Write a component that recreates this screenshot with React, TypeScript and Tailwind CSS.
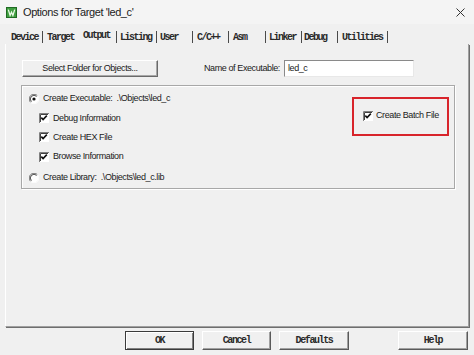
import React from "react";

const tabs: { label: string; cls: string; sep: boolean; sel?: boolean }[] = [
  { label: "Device", cls: "w-[37px] pl-[5px]", sep: true },
  { label: "Target", cls: "w-[37px] pl-[4px]", sep: false },
  { label: "Output", cls: "w-[37px] pl-[3px]", sep: true, sel: true },
  { label: "Listing", cls: "w-[40px] pl-[3px]", sep: true },
  { label: "User", cls: "w-[36px] pl-[3px]", sep: true },
  { label: "C/C++", cls: "w-[36px] pl-[4px]", sep: true },
  { label: "Asm", cls: "w-[37px] pl-[4px]", sep: true },
  { label: "Linker", cls: "w-[36px] pl-[3px]", sep: true },
  { label: "Debug", cls: "w-[36px] pl-[2px]", sep: true },
  { label: "Utilities", cls: "w-[50px] pl-[4px]", sep: true },
];

function Radio({ on }: { on: boolean }) {
  return (
    <svg width="10" height="10" viewBox="0 0 10 10" className="shrink-0">
      <circle cx="5" cy="5" r="4.3" fill="#fff" />
      <path d="M1.6 8.4 A4.6 4.6 0 0 1 8.4 1.6" stroke="#7a7a7a" strokeWidth="1" fill="none" />
      <path d="M2.4 7.6 A3.6 3.6 0 0 1 7.6 2.4" stroke="#404040" strokeWidth="1" fill="none" />
      <path d="M8.4 1.6 A4.6 4.6 0 0 1 1.6 8.4" stroke="#fdfdfd" strokeWidth="1" fill="none" />
      {on && <circle cx="5" cy="5" r="1.6" fill="#111" />}
    </svg>
  );
}

function Check() {
  return (
    <svg width="10" height="10" viewBox="0 0 10 10" className="shrink-0">
      <rect x="0" y="0" width="10" height="10" fill="#fff" />
      <path d="M0.5 10 V0.5 H10" stroke="#808080" strokeWidth="1" fill="none" />
      <path d="M1.5 9 V1.5 H9" stroke="#404040" strokeWidth="1" fill="none" />
      <path d="M2.3 4.6 L4.1 6.6 L7.8 2.6" stroke="#111" strokeWidth="1.6" fill="none" />
    </svg>
  );
}

function Btn({ label, cls, def }: { label: string; cls: string; def?: boolean }) {
  return (
    <div
      className={
        "flex items-center justify-center h-[19px] bg-[#f0f0f0] font-['Liberation_Mono',monospace] text-[10px] font-bold tracking-[-1.4px] text-[#2a2a2a] " +
        (def
          ? "border border-[#3a3a3a] shadow-[inset_1px_1px_0_#fff,inset_-1px_-1px_0_#808080] "
          : "border border-t-white border-l-white border-r-[#5a5a5a] border-b-[#5a5a5a] shadow-[inset_-1px_-1px_0_#a0a0a0] ") +
        cls
      }
    >
      {label}
    </div>
  );
}

export default function App() {
  return (
    <div className="w-[474px] h-[355px] bg-[#f0f0f0] overflow-hidden font-['Liberation_Sans',Arial,sans-serif] text-[#1a1a1a]">
      {/* Title bar */}
      <div className="h-[24px] flex items-center pl-[6px] pr-[9px] bg-[#f4f4f4]">
        <svg width="11" height="11" viewBox="0 0 11 11" className="shrink-0">
          <rect x="0.5" y="0.5" width="10" height="10" fill="#3f9e3f" stroke="#1f6a22" />
          <path d="M2.3 2.6 L4.1 8.4 L5.5 5.2 L6.9 8.4 L8.7 2.6" stroke="#eafbe6" strokeWidth="1.3" fill="none" />
        </svg>
        <span className="ml-[6px] text-[11px] tracking-[-0.4px] text-[#222]">Options for Target 'led_c'</span>
        <svg width="9" height="9" viewBox="0 0 9 9" className="ml-auto mt-[1px]">
          <path d="M0.5 0.5 L8.5 8.5 M8.5 0.5 L0.5 8.5" stroke="#333" strokeWidth="1" />
        </svg>
      </div>

      {/* Tabs */}
      <div className="flex h-[12px] mt-[7px] ml-[6px] font-['Liberation_Mono',monospace] text-[10px] font-bold tracking-[-1.5px] text-[#2a2a2a]">
        {tabs.map((t) => (
          <div
            key={t.label}
            className={
              "h-[12px] flex items-center leading-none " +
              t.cls +
              (t.sep ? " border-r border-[#4a4a4a]" : "") +
              (t.sel ? " pb-[3px]" : " pt-[1px]")
            }
          >
            {t.label}
          </div>
        ))}
      </div>

      {/* Panel */}
      <div className="mt-[1px] ml-[5px] w-[464px] h-[283px] border-l border-white border-r border-b border-r-[#a0a0a0] border-b-[#a0a0a0] shadow-[1px_1px_0_#6e6e6e] pt-[16px] pl-[16px] text-[9px] tracking-[-0.4px]">
        <div className="flex items-center h-[17px]">
          <div className="w-[136px] h-[17px] flex items-center justify-center border border-t-white border-l-white border-r-[#6a6a6a] border-b-[#6a6a6a] shadow-[inset_-1px_-1px_0_#a8a8a8]">
            Select Folder for Objects...
          </div>
          <span className="ml-[46px]">Name of Executable:</span>
          <div className="ml-[4px] w-[130px] h-[17px] bg-white border border-t-[#8a8a8a] border-l-[#8a8a8a] border-r-[#e8e8e8] border-b-[#e8e8e8] flex items-center pl-[3px]">
            led_c
          </div>
        </div>

        {/* Group box */}
        <div className="mt-[8px] -ml-[1px] w-[434px] h-[104px] border border-[#a8a8a8] shadow-[1px_1px_0_#fff,inset_1px_1px_0_#fff] flex">
          <div className="flex flex-col pt-[3px] pl-[7px]">
            <div className="h-[20px] flex items-center">
              <Radio on />
              <span className="ml-[4px]">Create Executable:&nbsp;&nbsp;.\Objects\led_c</span>
            </div>
            <div className="h-[20px] flex items-center pl-[10px]">
              <Check />
              <span className="ml-[4px]">Debug Information</span>
            </div>
            <div className="h-[19px] flex items-center pl-[10px]">
              <Check />
              <span className="ml-[4px]">Create HEX File</span>
            </div>
            <div className="h-[20px] flex items-center pl-[10px]">
              <Check />
              <span className="ml-[4px]">Browse Information</span>
            </div>
            <div className="h-[20px] mt-[2px] flex items-center">
              <Radio on={false} />
              <span className="ml-[4px]">Create Library:&nbsp;&nbsp;.\Objects\led_c.lib</span>
            </div>
          </div>
          <div className="ml-auto mr-[5px] mt-[11px] w-[97px] h-[39px] border-2 border-[#d8242b] flex items-center pl-[9px] pb-[1px]">
            <Check />
            <span className="ml-[3px]">Create Batch File</span>
          </div>
        </div>
      </div>

      {/* Buttons */}
      <div className="flex mt-[4px] ml-[125px]">
        <Btn label="OK" cls="w-[69px]" def />
        <Btn label="Cancel" cls="w-[69px] ml-[8px]" />
        <Btn label="Defaults" cls="w-[70px] ml-[8px]" />
        <Btn label="Help" cls="w-[70px] ml-[49px]" />
      </div>
    </div>
  );
}
